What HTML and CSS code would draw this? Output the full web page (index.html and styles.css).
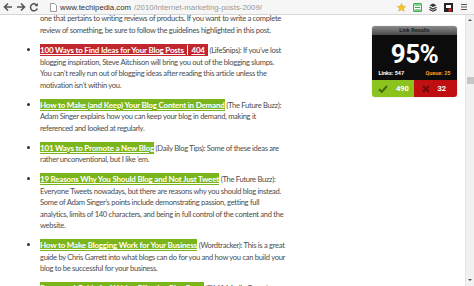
FILE: index.html
```html
<!DOCTYPE html>
<html>
<head>
<meta charset="utf-8">
<link rel="stylesheet" href="styles.css">
</head>
<body>
<div class="toolbar">
  <div class="nav">
    <svg width="10" height="10" viewBox="0 0 10 10"><path d="M9 5H2M5 1.5L1.5 5 5 8.5" fill="none" stroke="#555" stroke-width="1.6"/></svg>
    <svg width="10" height="10" viewBox="0 0 10 10"><path d="M1 5h7M5 1.5L8.5 5 5 8.5" fill="none" stroke="#555" stroke-width="1.6"/></svg>
    <svg width="10" height="10" viewBox="0 0 10 10"><path d="M8 3.5A3.5 3.5 0 1 0 8.3 6.5" fill="none" stroke="#555" stroke-width="1.5"/><path d="M8.8 1v3.3H5.5z" fill="#555"/></svg>
  </div>
  <div class="omnibox">
    <svg width="7" height="9" viewBox="0 0 7 9"><path d="M0.5 0.5h4l2 2v6h-6z" fill="#fff" stroke="#999"/></svg>
    <span class="host">www.techipedia.com</span><span class="path">/2010/internet-marketing-posts-2009/</span>
  </div>
  <div class="ext">
    <svg width="9" height="9" viewBox="0 0 10 10"><path d="M5 0.5l1.4 3 3.2.3-2.4 2.1.8 3.2L5 7.4 2 9.1l.8-3.2L.4 3.8l3.2-.3z" fill="#f7c42d" stroke="#d9a21b" stroke-width=".6"/></svg>
    <svg width="9" height="9" viewBox="0 0 9 9"><rect x="0" y="0" width="9" height="9" rx="1.5" fill="#3fae49"/><path d="M2 3.5h5M2 5.5h5" stroke="#fff" stroke-width="1"/><rect x="1.5" y="2" width="6" height="5" fill="none" stroke="#fff" stroke-width=".8"/></svg>
    <svg width="8" height="9" viewBox="0 0 8 9"><path d="M4 0.5L7.5 2.3 4 4.1 0.5 2.3z" fill="#333"/><path d="M0.5 4.3L4 6.1 7.5 4.3M0.5 6.4L4 8.2 7.5 6.4" fill="none" stroke="#333" stroke-width="1.2"/></svg>
    <svg width="9" height="9" viewBox="0 0 9 9"><rect width="9" height="9" fill="#222"/><rect x="2" y="2" width="5" height="3" fill="#fff"/><rect x="4.5" y="5.5" width="3" height="3" fill="#d92323"/></svg>
    <svg width="8" height="8" viewBox="0 0 8 8"><path d="M1 1.5h6M1 4h6M1 6.5h6" stroke="#555" stroke-width="1.2"/></svg>
  </div>
</div>
<div class="page">
  <div class="content">
    <p class="cont">one that pertains to writing reviews of products. If you want to write a complete<br>review of something, be sure to follow the guidelines highlighted in this post.</p>
    <ul class="list">
      <li><a class="hl red">100 Ways to Find Ideas for Your Blog Posts <span class="sep">404</span></a> (LifeSnips): If you’ve lost<br>blogging inspiration, Steve Aitchison will bring you out of the blogging slumps.<br>You can’t really run out of blogging ideas after reading this article unless the<br>motivation isn’t within you.</li>
      <li><a class="hl green">How to Make (and Keep) Your Blog Content in Demand</a> (The Future Buzz):<br>Adam Singer explains how you can keep your blog in demand, making it<br>referenced and looked at regularly.</li>
      <li><a class="hl green">101 Ways to Promote a New Blog</a> (Daily Blog Tips): Some of these ideas are<br>rather unconventional, but I like ’em.</li>
      <li><a class="hl green">19 Reasons Why You Should Blog and Not Just Tweet</a> (The Future Buzz):<br>Everyone Tweets nowadays, but there are reasons why you should blog instead.<br>Some of Adam Singer’s points include demonstrating passion, getting full<br>analytics, limits of 140 characters, and being in full control of the content and the<br>website.</li>
      <li><a class="hl green">How to Make Blogging Work for Your Business</a> (Wordtracker): This is a great<br>guide by Chris Garrett into what blogs can do for you and how you can build your<br>blog to be successful for your business.</li>
      <li><a class="hl green">Formatted Guide for Writing Effective Blog Posts</a> (DMA Media Group):</li>
    </ul>
  </div>
  <div class="scrollbar">
    <div class="arrow up"></div>
    <div class="thumb"></div>
    <div class="arrow down"></div>
  </div>
  <div class="widget">
    <div class="w-head">Link Results</div>
    <div class="w-body">
      <div class="pct">95%</div>
      <div class="stats"><span class="links">Links: 547</span><span class="queue">Queue: 25</span></div>
    </div>
    <div class="w-foot">
      <div class="ok"><svg width="10" height="8" viewBox="0 0 10 8"><path d="M1 4.2l2.8 2.6L9 1" fill="none" stroke="#3d6b06" stroke-width="2"/></svg><span>490</span></div>
      <div class="bad"><svg width="8" height="8" viewBox="0 0 8 8"><path d="M1 1l6 6M7 1L1 7" stroke="#6e0c0c" stroke-width="2"/></svg><span>32</span></div>
    </div>
  </div>
</div>
</body>
</html>
```
FILE: styles.css
```css
html, body {
  margin: 0;
  padding: 0;
  background: #fff;
  overflow: hidden;
}
body {
  width: 474px;
  height: 286px;
  font-family: Lato, "Open Sans", sans-serif;
}
.toolbar {
  height: 14px;
  background: #f6f6f6;
  border-bottom: 1px solid #d6d6d6;
  display: flex;
  align-items: center;
}
.nav {
  display: flex;
  gap: 3px;
  padding-left: 3px;
  width: 44px;
}
.omnibox {
  flex: 1;
  display: flex;
  align-items: center;
  gap: 3px;
  padding-left: 3px;
  font-family: "Liberation Sans", Arial, sans-serif;
  font-size: 7.8px;
}
.host { color: #333; }
.path { color: #999; }
.ext {
  display: flex;
  align-items: center;
  gap: 7px;
  padding-right: 6px;
}
.page {
  position: relative;
  display: flex;
  height: 271px;
}
.content {
  flex: 1;
  color: #4d4d4d;
  font-size: 7.6px;
  letter-spacing: -0.3px;
  line-height: 11.5px;
  white-space: nowrap;
}
.cont {
  margin: -2px 0 8px 40px;
}
.list {
  margin: 0;
  padding-left: 40px;
  list-style: disc;
}
.list li {
  margin-bottom: 7.5px;
}
.list li::marker {
  color: #333;
  font-size: 9px;
}
.hl {
  color: #fff;
  font-weight: bold;
  font-size: 8px;
  letter-spacing: -0.2px;
  text-decoration: underline;
  padding: 1px 0;
}
.red { background: #c2272d; padding-right: 3px; }
.green { background: #7bb51c; }
.sep {
  border-left: 1px solid #fff;
  padding-left: 3px;
  margin-left: 2px;
}
.scrollbar {
  width: 8px;
  background: #f1f1f1;
  border-left: 1px solid #e6e6e6;
  display: flex;
  flex-direction: column;
  align-items: center;
}
.arrow {
  width: 0;
  height: 0;
  border-left: 2px solid transparent;
  border-right: 2px solid transparent;
}
.up {
  border-bottom: 2px solid #555;
  margin-top: 4px;
}
.thumb {
  width: 7px;
  height: 7px;
  background: #c6c6c6;
  margin-top: 56px;
}
.down {
  border-top: 2px solid #555;
  margin-top: auto;
  margin-bottom: 5px;
}
.widget {
  position: absolute;
  left: 372px;
  top: 11px;
  width: 85px;
  border-radius: 3px;
  overflow: hidden;
  box-shadow: 0 0 1px rgba(0,0,0,.4);
  font-family: Roboto, "Liberation Sans", Arial, sans-serif;
  font-weight: bold;
}
.w-head {
  height: 9px;
  background: linear-gradient(#8a8a8a, #4a4a4a);
  color: #222;
  font-size: 5.5px;
  line-height: 9px;
  text-align: center;
}
.w-body {
  background: #0c0c0c;
  height: 45px;
  display: flex;
  flex-direction: column;
  align-items: center;
}
.pct {
  color: #fff;
  font-size: 26px;
  line-height: 30px;
  margin-top: 4px;
  letter-spacing: -0.5px;
}
.stats {
  display: flex;
  justify-content: space-between;
  width: 72px;
  font-size: 5.5px;
  line-height: 8px;
}
.links { color: #fff; }
.queue { color: #f0a020; }
.w-foot {
  display: flex;
  height: 17px;
  font-size: 7.5px;
  color: #fff;
}
.ok, .bad {
  flex: 1;
  display: flex;
  align-items: center;
  gap: 8px;
}
.ok { background: #8cc21e; padding-left: 6px; }
.bad { background: #c00f10; padding-left: 8px; }
```
